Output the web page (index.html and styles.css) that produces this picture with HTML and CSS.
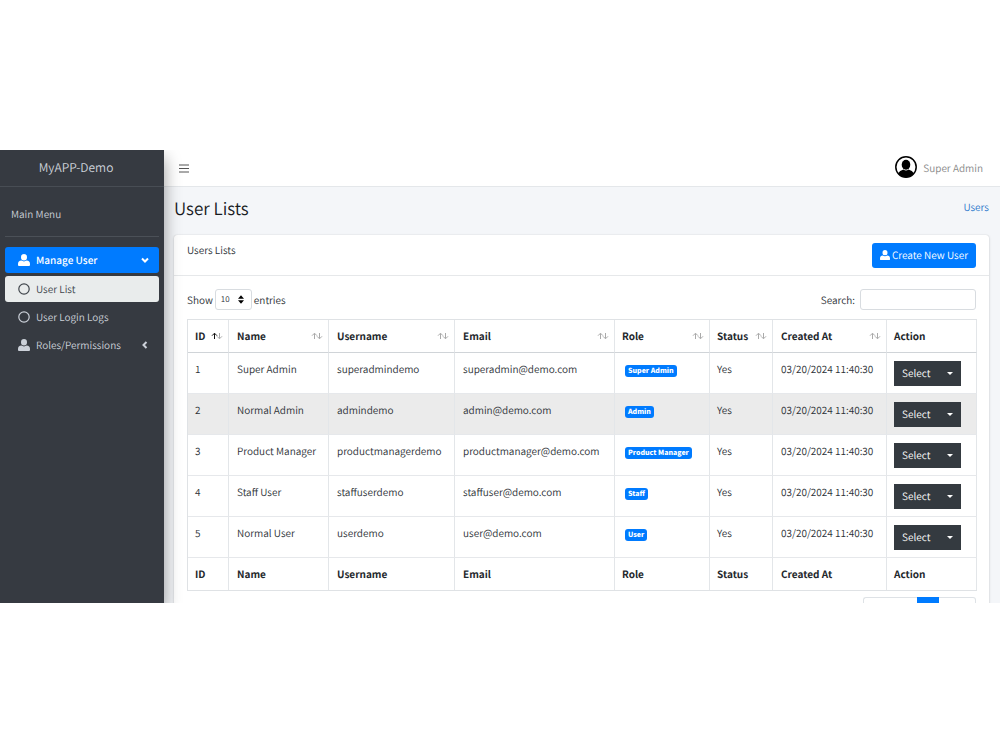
FILE: index.html
```
<!DOCTYPE html>
<html lang="en">
<head>
<meta charset="utf-8">
<title>User Lists</title>
<link rel="stylesheet" href="styles.css">
</head>
<body>
<svg class="defs" aria-hidden="true">
  <symbol id="user" viewBox="0 0 12 12"><path d="M6 0a3 3.200 0 0 1 0 6.400A3 3.200 0 0 1 6 0zM3.400 6.600Q6 8.200 8.600 6.600 12 6.900 12 10v1q0 1-1 1H1q-1 0-1-1v-1Q0 6.900 3.400 6.600z"/></symbol>
  <symbol id="ring" viewBox="0 0 12 12"><circle cx="6" cy="6" r="5.200" fill="none" stroke="currentColor" stroke-width="1.200"/></symbol>
  <symbol id="sort" viewBox="0 0 12 8"><path class="up" d="M3.500 7V1.500M1 3.700 3.500 1.200 6 3.700"/><path class="down" d="M8.500 1V6.500M6 4.300 8.500 6.800 11 4.300"/></symbol>
</svg>
<div class="app">
  <aside class="sidebar">
    <div class="brand">MyAPP-Demo</div>
    <div class="side-body">
      <div class="side-title">Main Menu</div>
      <nav class="menu">
        <a class="item active" href="#"><svg class="icon"><use href="#user"/></svg><span>Manage User</span><svg class="chev" viewBox="0 0 8 8"><path d="M1 2.500 4 5.500 7 2.500"/></svg></a>
        <a class="item current" href="#"><svg class="icon"><use href="#ring"/></svg><span>User List</span></a>
        <a class="item" href="#"><svg class="icon"><use href="#ring"/></svg><span>User Login Logs</span></a>
        <a class="item" href="#"><svg class="icon"><use href="#user"/></svg><span>Roles/Permissions</span><svg class="chev" viewBox="0 0 8 8"><path d="M5.500 1 2.500 4 5.500 7"/></svg></a>
      </nav>
    </div>
  </aside>
  <div class="page">
    <header class="topbar">
      <button class="burger" type="button" aria-label="Menu"><svg viewBox="0 0 10 9"><path d="M0 1h10M0 4.500h10M0 8h10"/></svg></button>
      <a class="account" href="#">
        <svg class="avatar" viewBox="0 0 22 22"><circle cx="11" cy="11" r="10.200" fill="#fff" stroke="#000" stroke-width="1.500"/><ellipse cx="11" cy="8.800" rx="4.300" ry="5"/><path d="M3 17.500Q4.500 14.300 8.500 13.400q2.500 2 5 0 4 .9 5.500 4.100Q15.500 21.200 11 21.200T3 17.500z"/></svg>
        <span>Super Admin</span>
      </a>
    </header>
    <main class="content">
      <div class="heading"><h1>User Lists</h1><a href="#">Users</a></div>
      <section class="card">
        <div class="card-head"><h2>Users Lists</h2><button class="create" type="button"><svg class="small-icon"><use href="#user"/></svg>Create New User</button></div>
        <div class="card-body">
          <div class="tools">
            <label class="length">Show <span class="picker"><select><option>10</option></select><svg viewBox="0 0 6 9"><path d="M0 3.700 3 .3l3 3.400zM0 5.300h6L3 8.700z"/></svg></span> entries</label>
            <label class="search">Search: <input type="search"></label>
          </div>
          <table>
            <colgroup><col class="c-id"><col class="c-name"><col class="c-user"><col class="c-mail"><col class="c-role"><col class="c-status"><col class="c-date"><col class="c-action"></colgroup>
            <thead><tr>
              <th><div class="th sorted">ID<svg><use href="#sort"/></svg></div></th>
              <th><div class="th">Name<svg><use href="#sort"/></svg></div></th>
              <th><div class="th">Username<svg><use href="#sort"/></svg></div></th>
              <th><div class="th">Email<svg><use href="#sort"/></svg></div></th>
              <th><div class="th">Role<svg><use href="#sort"/></svg></div></th>
              <th><div class="th">Status<svg><use href="#sort"/></svg></div></th>
              <th><div class="th">Created At<svg><use href="#sort"/></svg></div></th>
              <th>Action</th>
            </tr></thead>
            <tbody>
              <tr><td>1</td><td>Super Admin</td><td>superadmindemo</td><td>superadmin@demo.com</td><td><span class="badge">Super Admin</span></td><td>Yes</td><td>03/20/2024 11:40:30</td><td class="act"><button class="select" type="button">Select<i></i></button></td></tr>
              <tr class="hover"><td>2</td><td>Normal Admin</td><td>admindemo</td><td>admin@demo.com</td><td><span class="badge">Admin</span></td><td>Yes</td><td>03/20/2024 11:40:30</td><td class="act"><button class="select" type="button">Select<i></i></button></td></tr>
              <tr><td>3</td><td>Product Manager</td><td>productmanagerdemo</td><td>productmanager@demo.com</td><td><span class="badge">Product Manager</span></td><td>Yes</td><td>03/20/2024 11:40:30</td><td class="act"><button class="select" type="button">Select<i></i></button></td></tr>
              <tr><td>4</td><td>Staff User</td><td>staffuserdemo</td><td>staffuser@demo.com</td><td><span class="badge">Staff</span></td><td>Yes</td><td>03/20/2024 11:40:30</td><td class="act"><button class="select" type="button">Select<i></i></button></td></tr>
              <tr><td>5</td><td>Normal User</td><td>userdemo</td><td>user@demo.com</td><td><span class="badge">User</span></td><td>Yes</td><td>03/20/2024 11:40:30</td><td class="act"><button class="select" type="button">Select<i></i></button></td></tr>
            </tbody>
            <tfoot><tr><th>ID</th><th>Name</th><th>Username</th><th>Email</th><th>Role</th><th>Status</th><th>Created At</th><th>Action</th></tr></tfoot>
          </table>
          <div class="pager"><button class="prev" type="button" aria-label="Previous"></button><button class="on" type="button" aria-label="1"></button><button class="next" type="button" aria-label="Next"></button></div>
        </div>
      </section>
    </main>
  </div>
</div>
</body>
</html>
```
FILE: styles.css
```
* { box-sizing: border-box; }
body {
  margin: 0;
  height: 100vh;
  padding: 150px 0 147px;
  display: flex;
  background: #fff;
  color: #2c3136;
  font: 350 10px/16px "Noto Sans CJK SC", "Noto Sans", sans-serif;
  text-rendering: geometricPrecision;
}
button, input, select { font: inherit; color: inherit; text-rendering: inherit; }
button { border: 0; cursor: pointer; }
a { color: #2c78cc; text-decoration: none; }
h1, h2 { margin: 0; font-weight: 350; }
.defs { position: absolute; width: 0; height: 0; }

.app { flex: 1; display: flex; overflow: hidden; }
.sidebar {
  flex: 0 0 164px;
  z-index: 1;
  background: #363a41;
  color: #ccd1d9;
  box-shadow: 0 8px 16px rgba(0, 0, 0, .4);
}
.brand {
  height: 37px;
  padding-right: 12px;
  border-bottom: 1px solid #484d54;
  font-size: 12px;
  line-height: 36px;
  text-align: center;
}
.side-body { padding: 0 5px; }
.side-title {
  height: 50px;
  padding: 19px 6px 0;
  border-bottom: 1px solid #4b5057;
}
.menu { display: flex; flex-direction: column; gap: 2px; padding-top: 10px; }
.item {
  display: flex;
  align-items: center;
  height: 26px;
  padding: 0 10px 0 13px;
  border-radius: 3px;
  color: #ccd1d9;
}
.item span { flex: 1; padding-left: 6px; }
.active { background: #007bff; color: #fff; font-weight: 500; }
.current { margin-top: 1px; background: #e9ecec; color: #40464c; }
.icon { width: 12px; height: 12px; fill: currentColor; }
.chev { width: 8px; height: 8px; fill: none; stroke: currentColor; stroke-width: 2; }

.page { flex: 1; min-width: 0; background: #f4f6f9; }
.topbar {
  display: flex;
  align-items: center;
  justify-content: space-between;
  height: 37px;
  padding: 0 17px 0 15px;
  background: #fff;
  border-bottom: 1px solid #e4e7ea;
}
.burger { display: flex; padding: 0; background: none; }
.burger svg { width: 10px; height: 9px; stroke: #555; fill: none; }
.account { display: flex; align-items: center; gap: 6px; color: #888; }
.avatar { width: 22px; height: 22px; margin-bottom: 3px; }

.content { padding: 0 11px 0 10px; }
.heading { display: flex; justify-content: space-between; height: 48px; padding-top: 12px; }
.heading h1 { font-size: 17px; line-height: 18px; color: #181b1f; }
.card {
  background: #fff;
  border-radius: 3px;
  box-shadow: 0 0 1px rgba(0, 0, 0, .2), 0 1px 3px rgba(0, 0, 0, .15);
}
.card-head {
  display: flex;
  justify-content: space-between;
  height: 41px;
  padding: 8px 13px 0;
  border-bottom: 1px solid #e6e8ea;
}
.card-head h2 { font-size: 10px; line-height: 14px; }
.create {
  display: flex;
  align-items: center;
  gap: 2px;
  height: 25px;
  padding: 0 8px 1px;
  background: #007bff;
  border-radius: 3px;
  color: #fff;
}
.small-icon { width: 10px; height: 10px; fill: currentColor; }
.card-body { padding: 13px 12px 13px 13px; }
.tools { display: flex; justify-content: space-between; padding-bottom: 9px; padding-right: 1px; }
.tools label { display: flex; align-items: center; height: 21px; line-height: 14px; }
.length { gap: 2px; }
.search { gap: 5px; }
.picker { position: relative; display: flex; }
.picker select {
  appearance: none;
  width: 37px;
  height: 21px;
  padding: 0 5px;
  border: 1px solid #d8dce0;
  border-radius: 3px;
  background: #fff;
  font-size: 8px;
}
.picker svg { position: absolute; right: 8px; top: 6px; width: 6px; height: 9px; pointer-events: none; }
.search input { width: 116px; height: 21px; border: 1px solid #d8dce0; border-radius: 3px; background: #fff; }

table { width: 100%; table-layout: fixed; border-collapse: separate; border-spacing: 0; border: solid #dfe2e5; border-width: 1px 0 1px 1px; }
.c-id { width: 41px; }
.c-name { width: 100px; }
.c-user { width: 126px; }
.c-mail { width: 160px; }
.c-role { width: 95px; }
.c-status { width: 63px; }
.c-date { width: 114px; }
th, td { padding: 0 7px; border-right: 1px solid #e3e6e9; text-align: left; white-space: nowrap; }
th { height: 32px; color: #23272b; font-weight: 700; }
thead th { height: 33px; border-bottom: 1px solid #d0d4d8; }
td { height: 41px; padding-top: 8px; border-bottom: 1px solid #e6e8eb; vertical-align: top; }
th:nth-child(2), td:nth-child(2), th:nth-child(3), td:nth-child(3), th:nth-child(4), td:nth-child(4), th:nth-child(7), td:nth-child(7) { padding-left: 8px; }
.hover td { background: #ebebeb; }
.th { display: flex; align-items: center; justify-content: space-between; }
.th svg { width: 12px; height: 8px; margin-right: -2px; fill: none; color: #aaa; stroke: #aaa; }
.th.sorted svg { color: #111; }
.up { stroke: currentColor; }
.sorted .up { stroke-width: 2; }
.badge {
  display: inline-block;
  margin: 1px 0 0 3px;
  padding: 0 3px;
  border-radius: 3px;
  background: #007bff;
  color: #fff;
  font-size: 7px;
  font-weight: 900;
  line-height: 12px;
}
td.act { padding-top: 8px; }
.select {
  display: flex;
  align-items: center;
  justify-content: space-between;
  width: 67px;
  height: 25px;
  padding: 0 8px 1px;
  background: #343a40;
  color: #fff;
}
.select i { border: 3px solid transparent; border-top-color: #fff; border-bottom: 0; }

.pager { display: flex; justify-content: flex-end; padding: 6px 1px 0 0; }
.pager button { height: 24px; border: 1px solid #dee2e6; background: #fff; }
.pager .prev { width: 54px; border-right: 0; border-radius: 3px 0 0 3px; }
.pager .on { width: 22px; border-color: #007bff; background: #007bff; }
.pager .next { width: 37px; border-left: 0; border-radius: 0 3px 3px 0; }
```
